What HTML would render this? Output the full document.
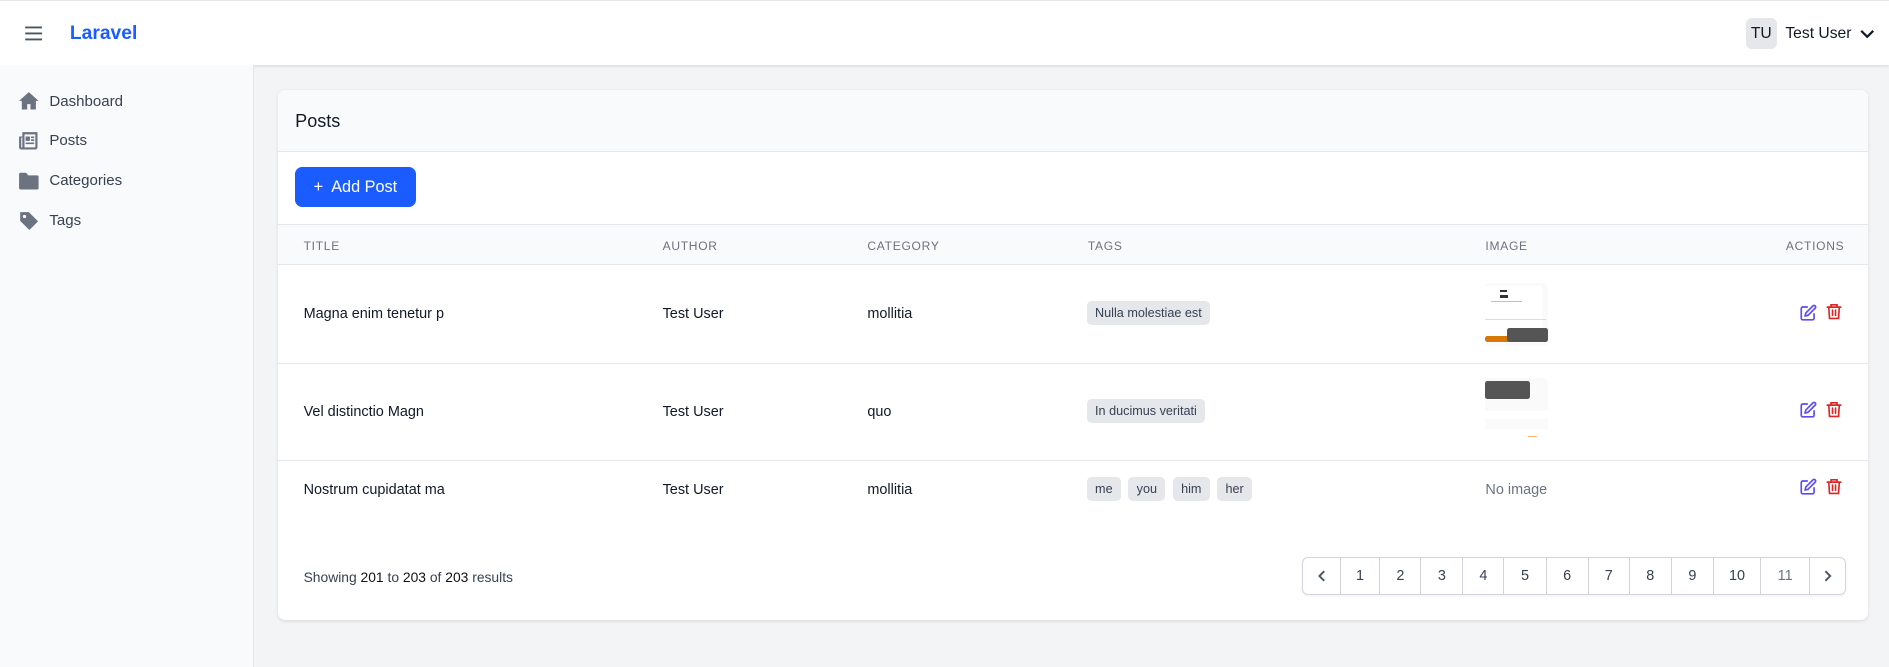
<!DOCTYPE html>
<html><head><meta charset="utf-8"><style>
html{zoom:1.2047}
*{box-sizing:border-box;margin:0;padding:0}
body{width:1568px;height:549px;overflow:hidden;background:#f3f4f6;font-family:"Liberation Sans",sans-serif;color:#111827;position:relative}
.hdr{position:absolute;left:0;top:0;width:1568px;height:54px;background:#fff;border-top:1px solid #e5e7eb;box-shadow:0 1px 3px rgba(0,0,0,.12)}
.side{position:absolute;left:0;top:54px;width:211px;height:500px;background:#f9fafb;border-right:1px solid #e5e7eb}
.nav{position:absolute;left:15px;font-size:12.5px;color:#374151;display:flex;align-items:center}
.nav svg{width:18px;height:18px;margin-right:8px;fill:#6b7280}
.card{position:absolute;left:231px;top:75px;width:1320px;height:440px;background:#fff;border-radius:6px;box-shadow:0 1px 3px rgba(0,0,0,.1);overflow:hidden}
.a{position:absolute}
.th{font-size:10px;letter-spacing:.6px;color:#6b7280;top:123px}
.td{font-size:12px;color:#111827}
.tag{display:inline-block;background:#e5e7eb;border-radius:4px;font-size:10.5px;color:#374151;padding:4px 7px;margin-right:6px}
.pg{position:absolute;left:850px;top:387px;height:32px;display:flex;border:1px solid #d1d5db;border-radius:5px;overflow:hidden;box-shadow:0 1px 2px rgba(0,0,0,.05)}
.pg div{height:30px;border-right:1px solid #d1d5db;display:flex;align-items:center;justify-content:center;font-size:12px;color:#374151}
.pg div:last-child{border-right:none}
.line{position:absolute;left:0;width:1320px;height:1px;background:#e5e7eb}
</style></head><body>
<div class="hdr">
 <svg class="a" style="left:20px;top:20px" width="16" height="14" viewBox="0 0 16 14"><path d="M1 2h14M1 7h14M1 12h14" stroke="#4b5563" stroke-width="1.6"/></svg>
 <div class="a" style="left:58px;top:18px;font-size:16px;font-weight:bold;color:#1a5cff">Laravel</div>
 <div class="a" style="left:1449px;top:14px;width:26px;height:26px;background:#e5e7eb;border-radius:5px;font-size:13px;display:flex;align-items:center;justify-content:center;color:#111827">TU</div>
 <div class="a" style="left:1482px;top:20px;font-size:13px;color:#111827">Test User</div>
 <svg class="a" style="left:1544px;top:23px" width="12" height="8" viewBox="0 0 12 8"><path d="M1 1.5l5 5 5-5" stroke="#111827" stroke-width="1.8" fill="none"/></svg>
</div>
<div class="side">
 <div class="nav" style="top:21px"><svg viewBox="0 0 20 20"><path d="M10 2L1 10h2.5v8h5v-5h3v5h5v-8H19z"/></svg>Dashboard</div>
 <div class="nav" style="top:54px"><svg viewBox="0 0 20 20"><path d="M4 2h14v14a2 2 0 01-2 2H3a2 2 0 01-2-2V6h3zM3 7v9h1V7zM6 4v12h10V4zm1 2h4v4H7zm5 0h3v1.5h-3zm0 2.5h3V10h-3zM7 11.5h8V13H7z"/></svg>Posts</div>
 <div class="nav" style="top:87px"><svg viewBox="0 0 20 20"><path d="M1 4a1.5 1.5 0 011.5-1.5h5L9.5 5h8A1.5 1.5 0 0119 6.5v10a1.5 1.5 0 01-1.5 1.5h-15A1.5 1.5 0 011 16.5z"/></svg>Categories</div>
 <div class="nav" style="top:120px"><svg viewBox="0 0 20 20"><path d="M2 2h8l8.5 8.5-8 8L2 10zm4 2.5a1.5 1.5 0 100 3 1.5 1.5 0 000-3z"/></svg>Tags</div>
</div>
<div class="card">
 <div class="a" style="left:0;top:0;width:1320px;height:51px;background:#f9fafb;border-bottom:1px solid #e5e7eb"></div>
 <div class="a" style="left:14px;top:17px;font-size:15px;color:#111827">Posts</div>
 <div class="a" style="left:14px;top:64px;width:100px;height:33px;background:#1a5cff;border-radius:6px;color:#fff;font-size:13.5px;display:flex;align-items:center;justify-content:center">+&nbsp; Add Post</div>
 <div class="a" style="left:0;top:111px;width:1320px;height:34px;background:#f9fafb;border-top:1px solid #e5e7eb;border-bottom:1px solid #e5e7eb"></div>
 <div class="a th" style="left:21px">TITLE</div>
 <div class="a th" style="left:319px">AUTHOR</div>
 <div class="a th" style="left:489px">CATEGORY</div>
 <div class="a th" style="left:672px">TAGS</div>
 <div class="a th" style="left:1002px">IMAGE</div>
 <div class="a th" style="right:20px">ACTIONS</div>
 <div class="line" style="top:226px"></div>
 <div class="line" style="top:307px"></div>
 <div class="a td" style="left:21px;top:179px">Magna enim tenetur p</div>
 <div class="a td" style="left:319px;top:179px">Test User</div>
 <div class="a td" style="left:489px;top:179px">mollitia</div>
 <div class="a" style="left:671px;top:175px"><span class="tag">Nulla molestiae est</span></div>
 <div class="a" style="left:1002px;top:160px;width:52px;height:52px;background:#fafafa;border-radius:4px;overflow:hidden">
  <div class="a" style="left:0;top:2px;width:47px;height:48px;background:#fff"></div>
  <div class="a" style="left:12px;top:6px;width:6px;height:1px;background:#333"></div>
  <div class="a" style="left:12px;top:10px;width:7px;height:2px;background:#333"></div>
  <div class="a" style="left:5px;top:15px;width:25px;height:1px;background:#f5b36b"></div>
  <div class="a" style="left:0;top:30px;width:50px;height:1px;background:#ddd"></div>
  <div class="a" style="left:0;top:44px;width:40px;height:5px;background:#d97706;border-radius:2px"></div>
  <div class="a" style="left:18px;top:37px;width:34px;height:12px;background:#555;border-radius:2px"></div>
 </div>
 <div class="a td" style="left:21px;top:260px">Vel distinctio Magn</div>
 <div class="a td" style="left:319px;top:260px">Test User</div>
 <div class="a td" style="left:489px;top:260px">quo</div>
 <div class="a" style="left:671px;top:256px"><span class="tag">In ducimus veritati</span></div>
 <div class="a" style="left:1002px;top:239px;width:52px;height:52px;background:#fff;border-radius:4px;overflow:hidden">
  <div class="a" style="left:0;top:0;width:52px;height:27px;background:#fafafa"></div>
  <div class="a" style="left:0;top:2px;width:37px;height:15px;background:#555;border-radius:2px"></div>
  <div class="a" style="left:0;top:34px;width:52px;height:8px;background:#fafafa"></div>
  <div class="a" style="left:35px;top:48px;width:8px;height:1px;background:#f5b36b"></div>
  <div class="a" style="left:35px;top:58px;width:8px;height:1px;background:#f5b36b"></div>
 </div>
 <div class="a td" style="left:21px;top:325px">Nostrum cupidatat ma</div>
 <div class="a td" style="left:319px;top:325px">Test User</div>
 <div class="a td" style="left:489px;top:325px">mollitia</div>
 <div class="a" style="left:671px;top:321px"><span class="tag">me</span><span class="tag">you</span><span class="tag">him</span><span class="tag">her</span></div>
 <div class="a" style="left:1002px;top:325px;font-size:12px;color:#6b7280">No image</div>
 <svg class="a" style="left:1262px;top:177px" width="15" height="15" viewBox="0 0 24 24" fill="none" stroke="#5b4cf5" stroke-width="2.2" stroke-linecap="round" stroke-linejoin="round"><path d="M11 4H5a2 2 0 00-2 2v13a2 2 0 002 2h13a2 2 0 002-2v-6"/><path d="M18.5 2.5a2.1 2.1 0 013 3L12 15l-4 1 1-4z"/></svg>
 <svg class="a" style="left:1284px;top:176px" width="15" height="16" viewBox="0 0 24 24" fill="none" stroke="#dc2626" stroke-width="2.2" stroke-linecap="round"><path d="M3 6h18M8 6V3h8v3M5 6l1 15h12l1-15M10 10v7M14 10v7"/></svg>
 <svg class="a" style="left:1262px;top:258px" width="15" height="15" viewBox="0 0 24 24" fill="none" stroke="#5b4cf5" stroke-width="2.2" stroke-linecap="round" stroke-linejoin="round"><path d="M11 4H5a2 2 0 00-2 2v13a2 2 0 002 2h13a2 2 0 002-2v-6"/><path d="M18.5 2.5a2.1 2.1 0 013 3L12 15l-4 1 1-4z"/></svg>
 <svg class="a" style="left:1284px;top:257px" width="15" height="16" viewBox="0 0 24 24" fill="none" stroke="#dc2626" stroke-width="2.2" stroke-linecap="round"><path d="M3 6h18M8 6V3h8v3M5 6l1 15h12l1-15M10 10v7M14 10v7"/></svg>
 <svg class="a" style="left:1262px;top:322px" width="15" height="15" viewBox="0 0 24 24" fill="none" stroke="#5b4cf5" stroke-width="2.2" stroke-linecap="round" stroke-linejoin="round"><path d="M11 4H5a2 2 0 00-2 2v13a2 2 0 002 2h13a2 2 0 002-2v-6"/><path d="M18.5 2.5a2.1 2.1 0 013 3L12 15l-4 1 1-4z"/></svg>
 <svg class="a" style="left:1284px;top:321px" width="15" height="16" viewBox="0 0 24 24" fill="none" stroke="#dc2626" stroke-width="2.2" stroke-linecap="round"><path d="M3 6h18M8 6V3h8v3M5 6l1 15h12l1-15M10 10v7M14 10v7"/></svg>
 <div class="a" style="left:21px;top:397px;font-size:11.5px;color:#374151">Showing <span style="color:#111">201</span> to <span style="color:#111">203</span> of <span style="color:#111">203</span> results</div>
 <div class="pg">
  <div style="width:31px"><svg width="8" height="10" viewBox="0 0 8 10"><path d="M6 1L2 5l4 4" stroke="#4b5563" stroke-width="1.6" fill="none"/></svg></div>
  <div style="width:33px">1</div><div style="width:34px">2</div><div style="width:35px">3</div><div style="width:34px">4</div><div style="width:35px">5</div><div style="width:35px">6</div><div style="width:34px">7</div><div style="width:35px">8</div><div style="width:35px">9</div><div style="width:39px">10</div><div style="width:41px;color:#6b7280">11</div>
  <div style="width:29px"><svg width="8" height="10" viewBox="0 0 8 10"><path d="M2 1l4 4-4 4" stroke="#4b5563" stroke-width="1.6" fill="none"/></svg></div>
 </div>
</div>
</body></html>
